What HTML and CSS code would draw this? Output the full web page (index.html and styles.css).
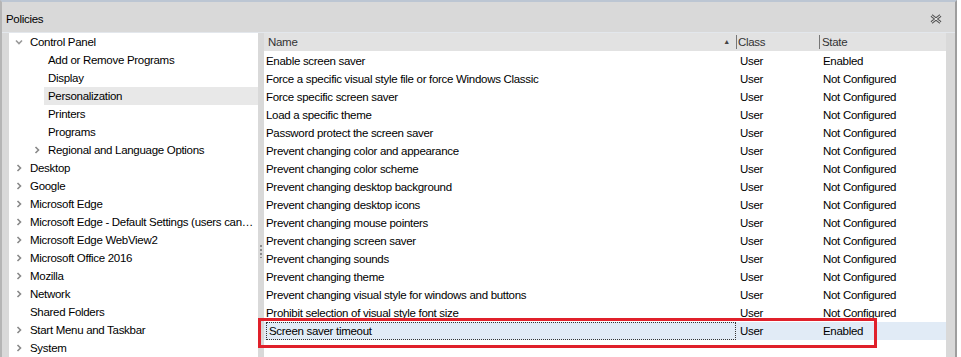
FILE: index.html
```html
<!DOCTYPE html>
<html lang="en">
<head>
<meta charset="UTF-8">
<title>Policies</title>
<link rel="stylesheet" href="styles.css">
</head>
<body>
<div class="window">
  <div class="titlebar">
    <span class="title">Policies</span>
    <svg class="close" width="12" height="10" viewBox="0 0 12 10">
      <path d="M1.5 1.5 L10.5 8.5 M10.5 1.5 L1.5 8.5" stroke="#5a5a5a" stroke-width="3" fill="none"/>
      <path d="M1.5 1.5 L10.5 8.5 M10.5 1.5 L1.5 8.5" stroke="#f2f2f2" stroke-width="1" fill="none"/>
    </svg>
  </div>
  <div class="panes">
    <ul class="tree">
      <li class="node"><span class="chev down"></span>Control Panel</li>
      <li class="node child"><span class="chev"></span>Add or Remove Programs</li>
      <li class="node child"><span class="chev"></span>Display</li>
      <li class="node child selected">Personalization</li>
      <li class="node child"><span class="chev"></span>Printers</li>
      <li class="node child"><span class="chev"></span>Programs</li>
      <li class="node child"><span class="chev right"></span>Regional and Language Options</li>
      <li class="node"><span class="chev right"></span>Desktop</li>
      <li class="node"><span class="chev right"></span>Google</li>
      <li class="node"><span class="chev right"></span>Microsoft Edge</li>
      <li class="node"><span class="chev right"></span>Microsoft Edge - Default Settings (users can…</li>
      <li class="node"><span class="chev right"></span>Microsoft Edge WebView2</li>
      <li class="node"><span class="chev right"></span>Microsoft Office 2016</li>
      <li class="node"><span class="chev right"></span>Mozilla</li>
      <li class="node"><span class="chev right"></span>Network</li>
      <li class="node"><span class="chev"></span>Shared Folders</li>
      <li class="node"><span class="chev right"></span>Start Menu and Taskbar</li>
      <li class="node"><span class="chev right"></span>System</li>
    </ul>
    <div class="splitter"><span class="grip"></span></div>
    <div class="list">
      <div class="header">
        <span class="col name">Name<span class="sort">▲</span></span>
        <span class="col cls sep">Class</span>
        <span class="col state sep">State</span>
      </div>
      <div class="row"><span class="col name">Enable screen saver</span><span class="col cls">User</span><span class="col state">Enabled</span></div>
      <div class="row"><span class="col name">Force a specific visual style file or force Windows Classic</span><span class="col cls">User</span><span class="col state">Not Configured</span></div>
      <div class="row"><span class="col name">Force specific screen saver</span><span class="col cls">User</span><span class="col state">Not Configured</span></div>
      <div class="row"><span class="col name">Load a specific theme</span><span class="col cls">User</span><span class="col state">Not Configured</span></div>
      <div class="row"><span class="col name">Password protect the screen saver</span><span class="col cls">User</span><span class="col state">Not Configured</span></div>
      <div class="row"><span class="col name">Prevent changing color and appearance</span><span class="col cls">User</span><span class="col state">Not Configured</span></div>
      <div class="row"><span class="col name">Prevent changing color scheme</span><span class="col cls">User</span><span class="col state">Not Configured</span></div>
      <div class="row"><span class="col name">Prevent changing desktop background</span><span class="col cls">User</span><span class="col state">Not Configured</span></div>
      <div class="row"><span class="col name">Prevent changing desktop icons</span><span class="col cls">User</span><span class="col state">Not Configured</span></div>
      <div class="row"><span class="col name">Prevent changing mouse pointers</span><span class="col cls">User</span><span class="col state">Not Configured</span></div>
      <div class="row"><span class="col name">Prevent changing screen saver</span><span class="col cls">User</span><span class="col state">Not Configured</span></div>
      <div class="row"><span class="col name">Prevent changing sounds</span><span class="col cls">User</span><span class="col state">Not Configured</span></div>
      <div class="row"><span class="col name">Prevent changing theme</span><span class="col cls">User</span><span class="col state">Not Configured</span></div>
      <div class="row"><span class="col name">Prevent changing visual style for windows and buttons</span><span class="col cls">User</span><span class="col state">Not Configured</span></div>
      <div class="row"><span class="col name">Prohibit selection of visual style font size</span><span class="col cls">User</span><span class="col state">Not Configured</span></div>
      <div class="row selected"><span class="col name focus">Screen saver timeout</span><span class="col cls">User</span><span class="col state">Enabled</span></div>
    </div>
  </div>
</div>
<div class="outside"></div>
<div class="highlight"></div>
</body>
</html>
```

FILE: styles.css
```css
body {
  margin: 0;
  width: 961px;
  height: 357px;
  overflow: hidden;
  background-color: #ffffff;
  font-family: "Segoe UI", "Liberation Sans", Arial, sans-serif;
  font-size: 11.5px;
  letter-spacing: -0.3px;
  color: #000000;
  position: relative;
  display: flex;
}

.window {
  width: 957px;
  height: 357px;
  background-color: #d9d9d9;
  border-top: 2px solid #bcc6d3;
  border-left: 2px solid #b5b5b5;
  border-right: 2px solid #9e9e9e;
  box-sizing: border-box;
  display: flex;
  flex-direction: column;
}

.titlebar {
  height: 31px;
  display: flex;
  align-items: center;
  justify-content: space-between;
  padding: 3px 13px 0 4px;
  border-bottom: 1px solid #e3e7ec;
  box-sizing: border-box;
}

.panes {
  flex: 1;
  display: flex;
  padding-left: 7px;
  padding-right: 9px;
  min-height: 0;
}

.tree {
  list-style: none;
  margin: 0;
  padding: 0;
  width: 249px;
  background-color: #ffffff;
  overflow: hidden;
}

.node {
  height: 18px;
  line-height: 18px;
  display: flex;
  align-items: center;
  padding-left: 4px;
  white-space: nowrap;
}

.node.child {
  padding-left: 22px;
}

.node.selected {
  background-color: #e8e8e8;
  margin-left: 35px;
  padding-left: 4px;
}

.chev {
  width: 8px;
  height: 8px;
  margin-right: 7px;
  margin-left: 2px;
  flex: none;
}

.chev.right {
  background: url("data:image/svg+xml;utf8,<svg xmlns='http://www.w3.org/2000/svg' width='8' height='8'><path d='M2.5 1 L5.5 4 L2.5 7' stroke='%23888888' stroke-width='1.6' fill='none'/></svg>") no-repeat center;
}

.chev.down {
  background: url("data:image/svg+xml;utf8,<svg xmlns='http://www.w3.org/2000/svg' width='8' height='8'><path d='M1 2.5 L4 5.5 L7 2.5' stroke='%23999999' stroke-width='1.6' fill='none'/></svg>") no-repeat center;
}

.splitter {
  width: 6px;
  display: flex;
  align-items: flex-start;
  justify-content: center;
}

.grip {
  margin-top: 212px;
  width: 2px;
  height: 13px;
  background: repeating-linear-gradient(to bottom, #8a8a8a 0, #8a8a8a 2px, transparent 2px, transparent 4px);
}

.list {
  flex: 1;
  background-color: #ffffff;
  display: flex;
  flex-direction: column;
  overflow: hidden;
}

.header {
  height: 18px;
  line-height: 18px;
  background-color: #e2e2e2;
  color: #333333;
  display: flex;
  margin-bottom: 1px;
}

.row {
  height: 18px;
  line-height: 18px;
  display: flex;
  white-space: nowrap;
}

.col {
  box-sizing: border-box;
  overflow: hidden;
  flex: none;
}

.col.name {
  width: 472px;
  padding-left: 2px;
  position: relative;
}

.col.cls {
  width: 83px;
  padding-left: 4px;
}

.col.state {
  flex: 1;
  padding-left: 4px;
}

.header .col.name {
  padding-left: 4px;
}

.header .sep {
  padding-left: 2px;
  border-left: 1px solid #777777;
  line-height: 14px;
  margin: 2px 0;
}

.header .col.cls {
  padding-left: 1px;
}

.sort {
  position: absolute;
  right: 6px;
  top: 0;
  font-size: 7px;
  color: #444444;
}

.row.selected {
  background-color: #e1ebf6;
}

.row .col.focus {
  outline: 1px dotted #333333;
  outline-offset: -1px;
  margin-left: 2px;
  width: 470px;
  padding-left: 3px;
}

.outside {
  flex: 1;
  background-color: #ffffff;
}

.highlight {
  position: absolute;
  left: 258px;
  top: 318px;
  width: 613px;
  height: 24px;
  border: 3px solid #e0202a;
}
```
